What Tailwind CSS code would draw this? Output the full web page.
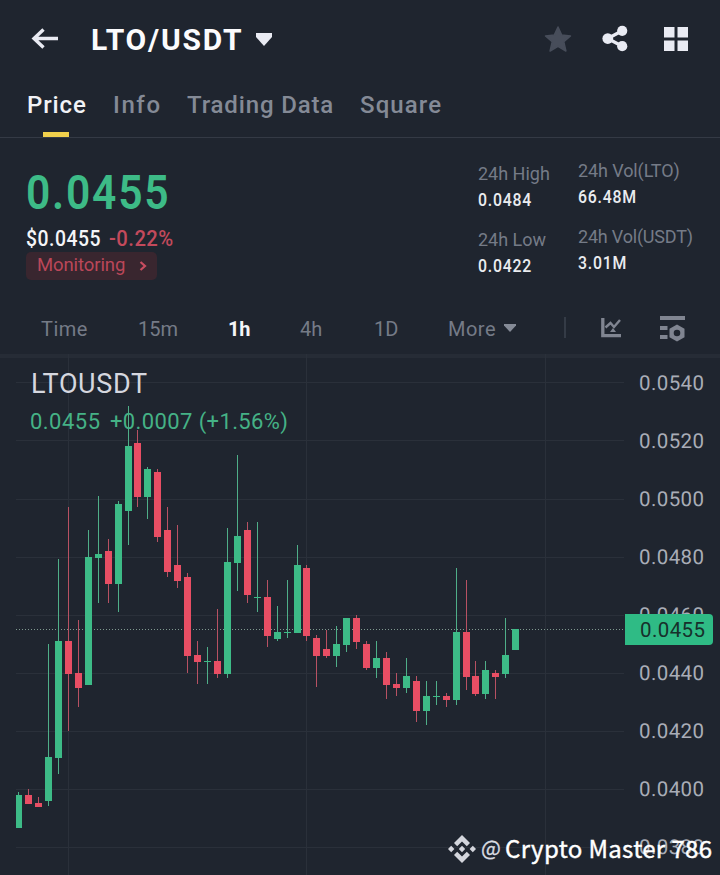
<!DOCTYPE html>
<html lang="en">
<head>
  <meta charset="UTF-8">
  <meta name="viewport" content="width=device-width, initial-scale=1.0">
  <title>LTO/USDT</title>
  <script src="https://cdn.jsdelivr.net/npm/@tailwindcss/browser@4"></script>
</head>
<body class="bg-[#1f252f] font-['Roboto',sans-serif] text-[#eaecef] w-[720px] h-[875px] overflow-hidden flex flex-col whitespace-nowrap">

<!-- Header -->
<header class="h-[78px] shrink-0 flex items-center pl-[31px] pr-[32px]">
  <svg class="w-[28px] h-[22px]" viewBox="0 0 28 22" fill="none" stroke="#e9ebf3" stroke-width="3.4">
    <path d="M27 10.5H3M12.5 1.5L3 10.5l9.5 9"/>
  </svg>
  <h1 class="ml-[32px] w-[153px] text-[30px] leading-none font-bold tracking-[1.75px] text-[#fbfbfd] pt-[2px]">LTO/USDT</h1>
  <svg class="ml-[12px] w-[16px] h-[13px]" viewBox="0 0 16 13" fill="#e9ebf3"><path d="M0 0h16v4L8 13 0 4z"/></svg>
  <div class="ml-auto flex items-center">
    <svg class="w-[28px] h-[28px]" viewBox="0 0 28 28" fill="#474d5a" stroke="#474d5a" stroke-width="1.5" stroke-linejoin="round">
      <path d="M14 2l3.7 8 8.8.9-6.7 5.9 2.1 9.2-7.9-4.6L6.100 26l2.100-9.200-6.700-5.900 8.800-.9z"/>
    </svg>
    <svg class="ml-[30px] w-[26px] h-[28px]" viewBox="0 0 27 29" fill="#e9ebf3">
      <path d="M21 6L6 14l15 8" fill="none" stroke="#e9ebf3" stroke-width="3.4"/>
      <circle cx="21" cy="6" r="5.300"/><circle cx="6" cy="14" r="5.600"/><circle cx="21" cy="22" r="5.300"/>
    </svg>
    <svg class="ml-[36px] w-[24px] h-[24px]" viewBox="0 0 24 24" fill="#e9ebf3">
      <path d="M0 0h10.500v10.500H0zM13.500 0H24v10.500H13.500zM0 13.500h10.500V24H0zM13.500 13.500H24V24H13.500z"/>
    </svg>
  </div>
</header>

<!-- Tabs -->
<nav class="h-[60px] shrink-0 flex border-b border-[#343a45] pl-[27px] text-[24px] leading-[55px] font-medium text-[#848a96]">
  <a class="w-[86px] relative text-[#f1f2f6] tracking-[0.9px]">Price
    <span class="absolute left-[16px] bottom-0 w-[26px] h-[5px] bg-[#f0d04c]"></span>
  </a>
  <a class="w-[74px] tracking-[1.6px]">Info</a>
  <a class="w-[173px] tracking-[0.85px]">Trading Data</a>
  <a class="tracking-[1.1px]">Square</a>
</nav>

<!-- Ticker -->
<section class="h-[166px] shrink-0 flex pl-[26px]">
  <div class="w-[452px] pt-[29px]">
    <div class="text-[49px] leading-[52px] font-semibold text-[#3dbb87] tracking-[2px] origin-left scale-x-[0.87]">0.0455</div>
    <div class="mt-[8px] flex text-[22px] leading-[24px] font-medium">
      <span class="w-[83px] tracking-[0.6px] origin-left scale-x-[0.88] text-[#f4f5f8]">$0.0455</span>
      <span class="tracking-[0.5px] origin-left scale-x-[0.92] text-[#c24a5c]">-0.22%</span>
    </div>
    <div class="mt-[1px] w-[131px] h-[28px] rounded-[5px] bg-[#39262f] text-[#bb4759] flex items-center pl-[11px] text-[18.500px]">
      <span class="w-[102px] tracking-[-0.1px]">Monitoring</span>
      <svg class="w-[8px] h-[10px]" viewBox="0 0 8 10" fill="none" stroke="#c94d60" stroke-width="2.2"><path d="M1.500 1l4.500 4-4.500 4"/></svg>
    </div>
  </div>
  <div class="w-[100px] pt-[23px] text-[18px] leading-[26px]">
    <div class="text-[#757b87]">24h High</div>
    <div class="font-medium tracking-[0.9px] origin-left scale-x-[0.88]">0.0484</div>
    <div class="mt-[14px] text-[#757b87]">24h Low</div>
    <div class="font-medium tracking-[0.9px] origin-left scale-x-[0.88]">0.0422</div>
  </div>
  <div class="pt-[20px] text-[18px] leading-[26px]">
    <div class="text-[#757b87] tracking-[-0.1px]">24h Vol(LTO)</div>
    <div class="font-medium tracking-[0.9px] origin-left scale-x-[0.88]">66.48M</div>
    <div class="mt-[14px] text-[#757b87] tracking-[-0.2px]">24h Vol(USDT)</div>
    <div class="font-medium tracking-[0.9px] origin-left scale-x-[0.88]">3.01M</div>
  </div>
</section>

<!-- Intervals -->
<div class="h-[49px] shrink-0 flex items-center pl-[41px] text-[20px] text-[#757b87]">
  <span class="w-[97px] tracking-[0.5px]">Time</span>
  <span class="w-[90px]">15m</span>
  <span class="w-[72px] font-bold tracking-[-0.3px] text-[#f4f5f8]">1h</span>
  <span class="w-[74px]">4h</span>
  <span class="w-[74px]">1D</span>
  <span class="w-[56px] tracking-[0.5px]">More</span>
  <svg class="w-[12px] h-[8px] -mt-[2px]" viewBox="0 0 12 8" fill="#848a96"><path d="M0 0h12v1.500L6 8 0 1.500z"/></svg>
  <span class="ml-[48px] w-[2px] h-[21px] -mt-[2px] bg-[#343b46]"></span>
  <svg class="ml-[35px] w-[20px] h-[20px] -mt-[2px]" viewBox="0 0 20 20" fill="none" stroke="#808591">
    <path d="M1.800 0v17.600H20" stroke-width="3.300"/>
    <path d="M4.500 9.500l5-4.500 3.500 4L19 2" stroke-width="2.400"/>
    <path d="M9 14l3-4 3 4z" fill="#808591" stroke="none"/>
  </svg>
  <svg class="ml-[39px] w-[26px] h-[26px]" viewBox="0 0 26 26" fill="#808591">
    <path d="M0 0h25v4H0zM0 10h7.500v4H0zM0 19h7.500v4H0z"/>
    <path fill-rule="evenodd" d="M17 8.500l7.500 4.200v8.600L17 25.500l-7.500-4.200v-8.600zM17 13.700a3.300 3.300 0 1 0 0 6.600 3.300 3.300 0 0 0 0-6.600z"/>
  </svg>
</div>

<!-- Chart -->
<main class="relative h-[522px] shrink-0">
  <svg class="block w-[720px] h-[522px]" viewBox="0 353 720 522" shape-rendering="crispEdges">
    <rect x="0" y="354" width="720" height="4" fill="#262c36"/>
    <g id="grid" fill="#2a303a"></g>
    <line x1="16" y1="629.500" x2="624" y2="629.500" stroke="#7f998f" stroke-dasharray="1 2"/>
    <g id="candles"></g>
    <g id="axis" fill="#a9adb7" font-size="20.500" text-rendering="geometricPrecision"></g>
    <path d="M625 614h84a4 4 0 0 1 4 4v23a4 4 0 0 1-4 4h-84z" fill="#2fbb85" shape-rendering="auto"/>
    <text x="640" y="637" font-size="20.500" textLength="65" fill="#17302b">0.0455</text>
    <text x="31" y="393" font-size="27" textLength="116" fill="#d5d7df">LTOUSDT</text>
    <text x="30" y="429" font-size="22" textLength="70" fill="#45b286">0.0455</text>
    <text x="110" y="429" font-size="22" textLength="178" fill="#45b286">+0.0007 (+1.56%)</text>
  </svg>

  <!-- Watermark -->
  <div class="absolute left-[448px] top-[480px] h-[32px] flex items-center font-['Noto_Sans_CJK_SC',sans-serif] text-white">
    <svg class="w-[28px] h-[28px]" viewBox="0 0 28 28" fill="#d3d5dc">
      <path d="M14 0l8 8-3.200 3.200L14 6.400l-4.800 4.800L6 8zM14 28l8-8-3.200-3.200-4.800 4.800-4.800-4.800L6 20zM3.200 10.800L6.400 14l-3.200 3.200L0 14zM24.800 10.800L28 14l-3.200 3.200-3.200-3.200zM14 10.800l3.200 3.200-3.200 3.200-3.200-3.200z"/>
    </svg>
    <span class="ml-[5px] w-[24px] -mt-[3px] text-[21px] text-[#d9dbe1] [-webkit-text-stroke:0.3px_#d9dbe1]">@</span>
    <span class="-mt-[2px] text-[24px] tracking-[0.36px] [-webkit-text-stroke:0.4px_white]">Crypto Master 786</span>
  </div>
</main>

<script>
  const UP = '#3dbb87', DOWN = '#e84e64';

  // left edge, high, body top, body bottom, low, rising
  const candles = [
    [15, 792, 795, 828, 828, 1], [25, 789, 795, 804, 804, 0], [35, 797, 803, 807, 807, 0],
    [45, 644, 757, 801, 806, 1], [55, 559, 641, 758, 774, 1], [65, 507, 641, 674, 731, 0],
    [75, 620, 673, 688, 707, 0], [85, 530, 557, 685, 685, 1], [95, 496, 554, 558, 603, 1],
    [105, 539, 551, 584, 603, 0], [115, 501, 504, 584, 612, 1], [125, 406, 446, 511, 545, 1],
    [134, 430, 443, 497, 507, 0], [144, 467, 469, 497, 519, 1], [154, 469, 472, 537, 542, 0],
    [164, 507, 530, 572, 577, 0], [174, 525, 565, 581, 588, 0], [184, 573, 577, 656, 673, 0],
    [194, 641, 655, 662, 684, 0], [204, 647, 661, 662, 684, 1], [214, 609, 661, 674, 678, 0],
    [224, 528, 562, 674, 678, 1], [234, 455, 536, 563, 591, 1], [244, 522, 530, 595, 603, 0],
    [254, 522, 597, 598, 612, 1], [264, 580, 597, 636, 647, 0], [274, 606, 632, 639, 641, 1],
    [284, 580, 632, 633, 638, 1], [294, 545, 565, 633, 633, 1], [303, 565, 568, 636, 641, 0],
    [313, 635, 638, 656, 687, 0], [323, 630, 649, 656, 658, 0], [333, 626, 644, 656, 667, 1],
    [343, 618, 618, 645, 652, 1], [353, 615, 618, 642, 649, 0], [363, 641, 644, 668, 670, 0],
    [373, 641, 658, 668, 678, 1], [383, 652, 658, 685, 699, 0], [393, 673, 684, 688, 696, 0],
    [403, 658, 676, 688, 693, 1], [413, 676, 681, 711, 722, 0], [423, 681, 696, 711, 725, 1],
    [433, 681, 696, 697, 705, 1], [443, 693, 696, 700, 707, 0], [453, 568, 632, 700, 705, 1],
    [463, 580, 632, 677, 690, 0], [472, 661, 676, 694, 696, 0], [482, 661, 670, 694, 699, 1],
    [492, 670, 673, 677, 699, 0], [502, 618, 655, 674, 678, 1], [512, 629, 629, 650, 650, 1],
  ];
  const rect = (x, y, w, h, fill) => `<rect x="${x}" y="${y}" width="${w}" height="${h}"${fill ? ` fill="${fill}"` : ''}/>`;

  document.getElementById('candles').innerHTML = candles.map(([x, high, top, bottom, low, up]) => {
    const color = up ? UP : DOWN;
    const left = Math.max(x, 16);
    return rect(x + 3, high, 1, low - high, up ? '#4fae88' : '#b75163') + rect(left, top, x + 7 - left, bottom - top, color);
  }).join('');

  const rows = [382, 440, 499, 557, 615, 673, 731, 789, 847];
  document.getElementById('grid').innerHTML =
    rows.map((y) => rect(16, y, 608, 1)).join('') +
    [68, 306, 545].map((x) => rect(x, 354, 1, 521)).join('');

  document.getElementById('axis').innerHTML = rows
    .map((y, i) => `<text x="639" y="${389.5 + i * 58.1}" textLength="65">${(0.054 - i * 0.002).toFixed(4)}</text>`)
    .join('');
</script>
</body>
</html>
